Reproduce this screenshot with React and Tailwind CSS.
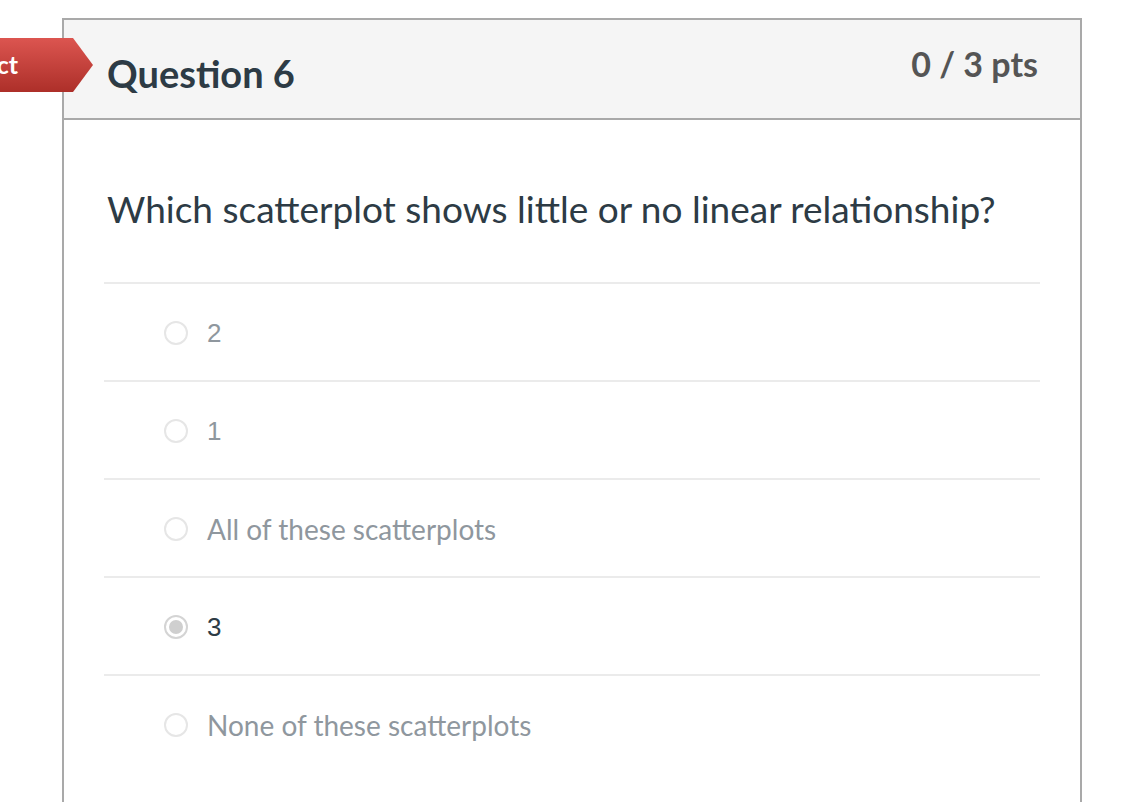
import React from "react";

const options = [
  { label: "2", num: true, selected: false },
  { label: "1", num: true, selected: false },
  { label: "All of these scatterplots", num: false, selected: false },
  { label: "3", num: true, selected: true },
  { label: "None of these scatterplots", num: false, selected: false },
];

function Radio({ selected }) {
  return (
    <span
      className={
        "flex h-[24px] w-[24px] shrink-0 items-center justify-center rounded-full border-2 bg-white " +
        (selected ? "border-[#d4d4d4]" : "border-[#e6e6e6]")
      }
    >
      {selected && <span className="h-[14px] w-[14px] rounded-full bg-[#cfcfcf]" />}
    </span>
  );
}

export default function App() {
  return (
    <div className="relative min-h-[802px] overflow-hidden bg-white pt-[18px] [font-family:Lato,'Open_Sans',sans-serif]">
      <div className="relative ml-[62px] w-[1020px] border-2 border-[#a9a9a9] border-b-0 min-h-[800px]">
        <div className="flex h-[100px] items-start justify-between border-b-2 border-[#a9a9a9] bg-[#f5f5f5] pl-[43px] pr-[42px]">
          <h2 className="mt-[33px] text-[38px] font-bold leading-[40px] text-[#2d3b45]">Question 6</h2>
          <div className="mt-[24px] text-[34px] font-bold leading-[40px] text-[#555555]">0 / 3 pts</div>
        </div>
        <div className="px-[40px]">
          <p className="pl-[3px] pt-[64px] pb-[48px] text-[37px] leading-[50px] text-[#2d3b45]">
            Which scatterplot shows little or no linear relationship?
          </p>
          <div>
            {options.map((o, i) => (
              <div
                key={i}
                className="flex h-[98px] items-center gap-[19px] border-t-2 border-[#ebebeb] pl-[60px] pt-[2px]"
              >
                <Radio selected={o.selected} />
                <span
                  className={
                    (o.num
                      ? "[font-family:'Liberation_Sans',Arial,sans-serif] text-[26px] "
                      : "text-[28px] ") +
                    (o.selected ? "text-[#2d3b45]" : "text-[#8f979e]")
                  }
                >
                  {o.label}
                </span>
              </div>
            ))}
          </div>
        </div>
      </div>
      <div className="absolute left-[-80px] top-[38px] h-[54px] w-[173px] bg-gradient-to-b from-[#dc5550] to-[#ad2f29] [clip-path:polygon(0_0,153px_0,173px_50%,153px_100%,0_100%)]">
        <span className="absolute right-[75px] top-[11px] text-[25px] font-bold leading-[30px] text-white">
          Incorrect
        </span>
      </div>
    </div>
  );
}
